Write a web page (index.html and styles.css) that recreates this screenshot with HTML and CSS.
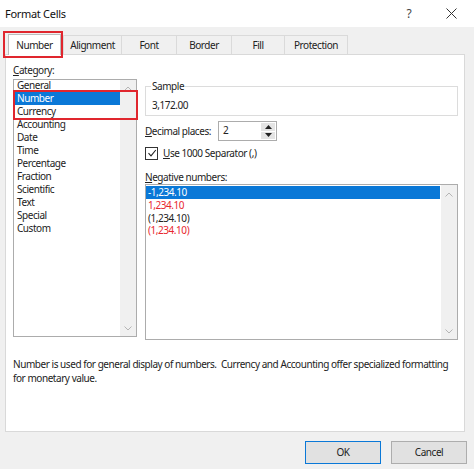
FILE: index.html
```html
<!DOCTYPE html>
<html lang="en">
<head>
	<meta charset="UTF-8">
	<title>Format Cells</title>
	<link rel="stylesheet" href="styles.css">
</head>
<body>
	<div class="dialog">
		<div class="titlebar">
			<span class="title">Format Cells</span>
			<span class="help">?</span>
			<span class="close">
				<svg width="11" height="11" viewBox="0 0 11 11"><path d="M0.5 0.5L10.5 10.5M10.5 0.5L0.5 10.5" stroke="#333" stroke-width="1" fill="none"/></svg>
			</span>
		</div>

		<div class="tabs">
			<div class="tab active">Number</div>
			<div class="tab w-align">Alignment</div>
			<div class="tab w-font">Font</div>
			<div class="tab w-border">Border</div>
			<div class="tab w-fill">Fill</div>
			<div class="tab w-prot">Protection</div>
			<div class="mark mark-tab"></div>
		</div>

		<div class="panel">
			<div class="cols">
				<div class="left">
					<div class="label"><u>C</u>ategory:</div>
					<div class="listbox cat">
						<ul class="items">
							<li>General</li>
							<li class="sel">Number</li>
							<li>Currency</li>
							<li>Accounting</li>
							<li>Date</li>
							<li>Time</li>
							<li>Percentage</li>
							<li>Fraction</li>
							<li>Scientific</li>
							<li>Text</li>
							<li>Special</li>
							<li>Custom</li>
						</ul>
						<div class="scroll">
							<svg width="8" height="5" viewBox="0 0 8 5"><path d="M0.5 4.5L4 1L7.5 4.5" stroke="#b5b5b5" fill="none"/></svg>
							<svg width="8" height="5" viewBox="0 0 8 5"><path d="M0.5 0.5L4 4L7.5 0.5" stroke="#b5b5b5" fill="none"/></svg>
						</div>
						<div class="mark mark-list"></div>
					</div>
				</div>

				<div class="right">
					<fieldset class="sample">
						<legend>Sample</legend>
						<div class="sample-val">3,172.00</div>
					</fieldset>

					<div class="row decimals">
						<span><u>D</u>ecimal places:</span>
						<div class="spin">
							<span class="spin-val">2</span>
							<div class="spin-btns">
								<div class="sb"><svg width="7" height="4" viewBox="0 0 7 4"><path d="M0 4L3.5 0L7 4Z" fill="#222"/></svg></div>
								<div class="sb"><svg width="7" height="4" viewBox="0 0 7 4"><path d="M0 0L3.5 4L7 0Z" fill="#222"/></svg></div>
							</div>
						</div>
					</div>

					<div class="row check">
						<span class="box">
							<svg width="10" height="10" viewBox="0 0 10 10"><path d="M1.5 5.2L4 7.8L8.8 2" stroke="#222" stroke-width="1.1" fill="none"/></svg>
						</span>
						<span><u>U</u>se 1000 Separator (,)</span>
					</div>

					<div class="label neg-label"><u>N</u>egative numbers:</div>
					<div class="listbox neg">
						<ul class="items">
							<li class="sel">-1,234.10</li>
							<li class="red">1,234.10</li>
							<li>(1,234.10)</li>
							<li class="red">(1,234.10)</li>
						</ul>
						<div class="scroll">
							<svg width="8" height="5" viewBox="0 0 8 5"><path d="M0.5 4.5L4 1L7.5 4.5" stroke="#b5b5b5" fill="none"/></svg>
							<svg width="8" height="5" viewBox="0 0 8 5"><path d="M0.5 0.5L4 4L7.5 0.5" stroke="#b5b5b5" fill="none"/></svg>
						</div>
					</div>
				</div>
			</div>

			<p class="desc">Number is used for general display of numbers.&nbsp; Currency and Accounting offer specialized formatting for monetary value.</p>
		</div>

		<div class="buttons">
			<div class="btn ok">OK</div>
			<div class="btn">Cancel</div>
		</div>
	</div>
</body>
</html>
```

FILE: styles.css
```css
*{
	margin: 0;
	padding: 0;
	box-sizing: border-box;
}
body{
	width: 474px;
	height: 469px;
	overflow: hidden;
	background: #f0f0f0;
	font-family: "Noto Sans", "Open Sans", sans-serif;
	font-size: 10px;
	letter-spacing: -0.45px;
	color: #222;
}
ul{
	list-style: none;
}
u{
	text-decoration: underline;
	text-underline-offset: 1px;
}
.dialog{
	position: relative;
	height: 469px;
}
/* title bar */
.titlebar{
	display: flex;
	align-items: center;
	height: 27px;
	background: #fff;
	padding-left: 5px;
}
.title{
	font-size: 11px;
	letter-spacing: -0.3px;
	flex: 1;
	color: #111;
}
.help{
	flex: none;
	width: 30px;
	text-align: center;
	font-size: 12px;
	color: #444;
	margin-right: 4px;
}
.close{
	flex: none;
	width: 46px;
	display: flex;
	justify-content: center;
}
/* tabs */
.tabs{
	position: relative;
	display: flex;
	align-items: flex-end;
	height: 27px;
	padding-left: 8px;
}
.tab{
	height: 19px;
	line-height: 18px;
	text-align: center;
	border: 1px solid #dadada;
	border-bottom: none;
	border-left: none;
	background: #f0f0f0;
}
.tab.active{
	width: 53px;
	height: 21px;
	line-height: 20px;
	background: #fff;
	border: 1px solid #bdbdbd;
	border-bottom: none;
	margin-right: 2px;
	position: relative;
	z-index: 1;
	top: 1px;
}
.w-align{ width: 59px; border-left: 1px solid #dadada; }
.w-font{ width: 55px; }
.w-border{ width: 55px; }
.w-fill{ width: 53px; }
.w-prot{ width: 63px; }
.mark{
	position: absolute;
	border: 2.5px solid #e0262e;
	z-index: 3;
}
.mark-tab{
	left: 3px;
	top: 4px;
	width: 60px;
	height: 27px;
}
/* panel */
.panel{
	margin: 0 9px 0 5px;
	height: 378px;
	background: #fff;
	border: 1px solid #d9d9d9;
	padding: 10px 6px 0 7px;
}
.cols{
	display: flex;
	gap: 8px;
}
.left{
	width: 124px;
}
.right{
	flex: 1;
}
.label{
	height: 14px;
	line-height: 10px;
}
.listbox{
	position: relative;
	display: flex;
	border: 1px solid #acacac;
	background: #fff;
}
.listbox.cat{
	height: 258px;
}
.listbox.neg{
	height: 156px;
}
.items{
	flex: 1;
	overflow: hidden;
}
.items li{
	height: 12.8px;
	line-height: 12.8px;
	padding-left: 2px;
	white-space: nowrap;
}
.cat .items{
	margin-top: -1px;
}
.cat .items li{
	height: 13px;
	line-height: 13px;
	padding-left: 3px;
}
.items li.sel{
	background: #0a78d7;
	color: #fff;
}
.items li.red{
	color: #e8262e;
}
.scroll{
	width: 16px;
	background: #f0f0f0;
	display: flex;
	flex-direction: column;
	justify-content: space-between;
	align-items: center;
	padding: 6px 0 5px;
}
.mark-list{
	left: -1px;
	top: 10px;
	width: 125px;
	height: 30px;
}
/* right column */
.sample{
	border: 1px solid #dcdcdc;
	height: 35px;
	padding: 0 6px;
	margin-top: 16px;
}
.sample legend{
	padding: 0 1px;
	margin-left: -1px;
	line-height: 10px;
}
.sample-val{
	line-height: 12px;
	margin-top: 8px;
}
.row{
	display: flex;
	align-items: center;
}
.decimals{
	margin-top: 5px;
	height: 20px;
}
.decimals > span{
	width: 73px;
}
.spin{
	display: flex;
	width: 59px;
	height: 20px;
	border: 1px solid #acacac;
}
.spin-val{
	flex: 1;
	padding-left: 4px;
	line-height: 17px;
}
.spin-btns{
	width: 16px;
	display: flex;
	flex-direction: column;
	gap: 1px;
	padding: 1px;
}
.sb{
	flex: 1;
	background: #e4e4e4;
	display: flex;
	align-items: center;
	justify-content: center;
}
.check{
	margin-top: 5px;
	height: 14px;
	gap: 5px;
}
.box{
	width: 13px;
	height: 13px;
	border: 1px solid #333;
	display: flex;
	align-items: center;
	justify-content: center;
}
.neg-label{
	margin-top: 11px;
	height: 13px;
	line-height: 12px;
}
.neg .items li:first-child{
	margin-top: 1px;
}
.neg .items li{
	margin-right: 1px;
}
.neg .scroll{
	padding-top: 7px;
}
.desc{
	margin-top: 17px;
	line-height: 14px;
}
/* buttons */
.buttons{
	display: flex;
	justify-content: flex-end;
	gap: 10px;
	padding: 9px 7px 0 0;
}
.btn{
	width: 76px;
	height: 23px;
	line-height: 21px;
	text-align: center;
	background: #e1e1e1;
	border: 1px solid #adadad;
}
.btn.ok{
	border: 1px solid #0a78d7;
}
```
